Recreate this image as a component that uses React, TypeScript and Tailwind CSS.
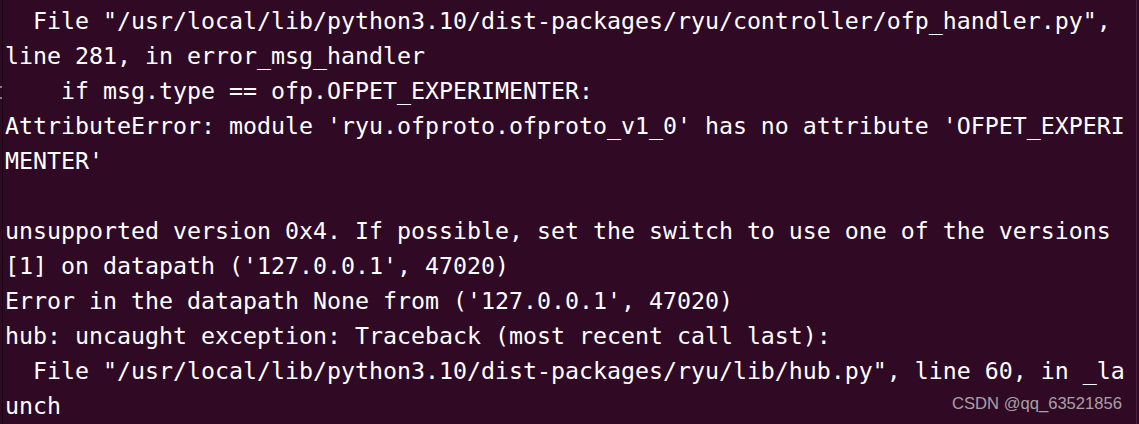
const LINES = [
  '  File "/usr/local/lib/python3.10/dist-packages/ryu/controller/ofp_handler.py",',
  'line 281, in error_msg_handler',
  '    if msg.type == ofp.OFPET_EXPERIMENTER:',
  "AttributeError: module 'ryu.ofproto.ofproto_v1_0' has no attribute 'OFPET_EXPERI",
  "MENTER'",
  '',
  'unsupported version 0x4. If possible, set the switch to use one of the versions',
  "[1] on datapath ('127.0.0.1', 47020)",
  "Error in the datapath None from ('127.0.0.1', 47020)",
  'hub: uncaught exception: Traceback (most recent call last):',
  '  File "/usr/local/lib/python3.10/dist-packages/ryu/lib/hub.py", line 60, in _la',
  'unch',
];

export default function App() {
  return (
    <div className="relative w-[1139px] h-[424px] overflow-hidden bg-[#300a24] flex">
      <div className="w-[3px] h-full bg-[#300a24] border-r border-[#1a0514]" />
      <div className="flex-1 pl-[2px] pt-[3px] font-['DejaVu_Sans_Mono',monospace] text-[23.25px] leading-[35px] text-[#ffffff] whitespace-pre">
        {LINES.map((l, i) => (
          <div key={i} className="h-[35px]">{l}</div>
        ))}
      </div>
      <div className="w-[3px] h-full border-l border-[#4a2340]" />
      <div className="absolute left-0 top-[86px] w-[2px] h-[2px] bg-[#8a7a86]" />
      <div className="absolute left-0 top-[97px] w-[2px] h-[2px] bg-[#8a7a86]" />
      <div className="absolute right-[17px] bottom-[10px] font-['Liberation_Sans',sans-serif] text-[16.6px] leading-[20px] text-[#a8a0a6]">
        CSDN @qq_63521856
      </div>
    </div>
  );
}
